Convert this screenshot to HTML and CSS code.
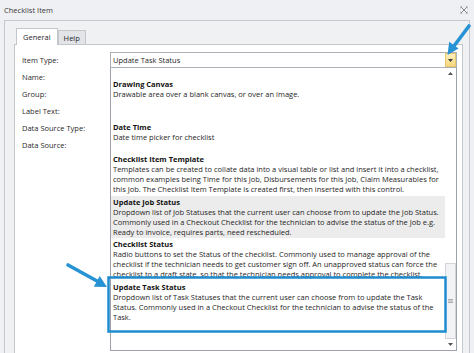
FILE: index.html
```html
<!DOCTYPE html>
<html>
<head>
<meta charset="utf-8">
<title>Checklist Item</title>
<link rel="stylesheet" href="styles.css">
</head>
<body>
<div class="window">
  <div class="titlebar">
    <span class="title">Checklist Item</span>
    <svg class="close" viewBox="0 0 8 8" width="8" height="8"><path d="M1 1L7 7M7 1L1 7" stroke="#8c8c8c" stroke-width="1" fill="none"/><path d="M0.5 2.5V0.5H2.5M5.5 0.5H7.5V2.5M7.5 5.5V7.5H5.5M2.5 7.5H0.5V5.5" stroke="#b5b5b5" stroke-width="0.8" fill="none"/></svg>
  </div>
  <div class="outer">
    <div class="tabs">
      <div class="tab tab-active">General</div>
      <div class="tab">Help</div>
    </div>
    <div class="page">
      <div class="form">
        <div class="labels">
          <div class="label">Item Type:</div>
          <div class="label">Name:</div>
          <div class="label">Group:</div>
          <div class="label">Label Text:</div>
          <div class="label">Data Source Type:</div>
          <div class="label">Data Source:</div>
        </div>
        <div class="field">
          <div class="combo">
            <span class="combo-text">Update Task Status</span>
            <div class="drop"><svg viewBox="0 0 5 3" width="5" height="3"><path d="M0 0H5L2.5 3Z" fill="#3a3a3a"/></svg></div>
          </div>
          <div class="list">
            <div class="items">
              <div class="item">
                <div class="it-title">Drawing Canvas</div>
                <div class="it-line">Drawable area over a blank canvas, or over an image.</div>
              </div>
              <div class="item">
                <div class="it-title">Date Time</div>
                <div class="it-line">Date time picker for checklist</div>
              </div>
              <div class="item">
                <div class="it-title">Checklist Item Template</div>
                <div class="it-line">Templates can be created to collate data into a visual table or list and insert it into a checklist,</div>
                <div class="it-line">common examples being Time for this Job, Disbursements for this Job, Claim Measurables for</div>
                <div class="it-line">this Job. The Checklist Item Template is created first, then inserted with this control.</div>
              </div>
              <div class="item item-hover">
                <div class="it-title">Update Job Status</div>
                <div class="it-line">Dropdown list of Job Statuses that the current user can choose from to update the Job Status.</div>
                <div class="it-line">Commonly used in a Checkout Checklist for the technician to advise the status of the Job e.g.</div>
                <div class="it-line">Ready to invoice, requires parts, need rescheduled.</div>
              </div>
              <div class="item">
                <div class="it-title">Checklist Status</div>
                <div class="it-line">Radio buttons to set the Status of the checklist. Commonly used to manage approval of the</div>
                <div class="it-line">checklist if the technician needs to get customer sign off. An unapproved status can force the</div>
                <div class="it-line">checklist to a draft state, so that the technician needs approval to complete the checklist.</div>
              </div>
              <div class="item">
                <div class="it-title">Update Task Status</div>
                <div class="it-line">Dropdown list of Task Statuses that the current user can choose from to update the Task</div>
                <div class="it-line">Status. Commonly used in a Checkout Checklist for the technician to advise the status of the</div>
                <div class="it-line">Task.</div>
              </div>
            </div>
            <div class="scroll">
              <div class="sb-btn"><svg viewBox="0 0 5 3" width="5" height="3"><path d="M0 3H5L2.5 0Z" fill="#555"/></svg></div>
              <div class="sb-track">
                <div class="sb-thumb"><svg viewBox="0 0 5 4" width="5" height="4"><path d="M0 0.5H5M0 2H5M0 3.5H5" stroke="#9a9a9a" stroke-width="0.8"/></svg></div>
              </div>
              <div class="sb-btn"><svg viewBox="0 0 5 3" width="5" height="3"><path d="M0 0H5L2.5 3Z" fill="#555"/></svg></div>
            </div>
          </div>
        </div>
      </div>
    </div>
  </div>
  <svg class="annot" viewBox="0 0 474 353" width="474" height="353">
    <rect x="108.5" y="277.5" width="337" height="54" fill="none" stroke="#1e8ccf" stroke-width="2.5"/>
    <path d="M469 26L454 46" stroke="#2793d4" stroke-width="3.6" stroke-linecap="round" fill="none"/>
    <path d="M447.5 55L449.2 41.8L458.5 48.6Z" fill="#2793d4"/>
    <path d="M68 265L97 281" stroke="#2793d4" stroke-width="3.6" stroke-linecap="round" fill="none"/>
    <path d="M107 287L93.8 286.8L99.7 276Z" fill="#2793d4"/>
  </svg>
</div>
</body>
</html>
```

FILE: styles.css
```css
* { box-sizing: border-box; }
html, body { margin: 0; padding: 0; }
body {
  width: 474px;
  height: 353px;
  overflow: hidden;
  background: #eef0f3;
  font-family: "Open Sans", "Noto Sans", sans-serif;
  font-size: 7.5px;
  color: #1f1f1f;
}
.window {
  position: relative;
  width: 474px;
  height: 353px;
  display: flex;
  flex-direction: column;
  background: #eef0f3;
  overflow: hidden;
}
.titlebar {
  height: 20px;
  flex: none;
  display: flex;
  align-items: center;
  justify-content: space-between;
  padding: 0 6px 0 4px;
}
.title { font-size: 7.5px; color: #3a3a3a; }
.close { display: block; }
.outer {
  flex: 1;
  margin: 0 4px;
  border: 1px solid #c5c8cd;
  border-bottom: none;
  background: #f0f1f3;
  padding: 7px 6px 0 9px;
  display: flex;
  flex-direction: column;
  min-height: 0;
}
.tabs {
  display: flex;
  align-items: flex-end;
  padding-left: 2px;
  height: 17px;
  flex: none;
  position: relative;
  z-index: 1;
  margin-bottom: -1px;
}
.tab {
  height: 14px;
  padding: 0 5px;
  display: flex;
  align-items: center;
  border: 1px solid #c3c6cb;
  border-bottom: none;
  background: #e2e4e7;
  color: #2a2a2a;
  margin-bottom: 1px;
}
.tab-active {
  height: 17px;
  padding: 0 6px;
  background: #ffffff;
  margin-bottom: 0;
}
.page {
  flex: 1;
  border: 1px solid #c3c6cb;
  border-bottom: none;
  background: #ffffff;
  padding: 7px 5px 0 7px;
  min-height: 0;
}
.form {
  display: grid;
  grid-template-columns: 88px 1fr;
}
.labels { display: flex; flex-direction: column; }
.label {
  height: 17px;
  line-height: 17px;
  color: #2a2a2a;
}
.field { display: flex; flex-direction: column; }
.combo {
  height: 16px;
  border: 1px solid #abafb6;
  display: flex;
  align-items: center;
  justify-content: space-between;
  padding: 0 0 0 2px;
  background: #fff;
}
.combo-text { color: #1f1f1f; }
.drop {
  width: 11px;
  height: 14px;
  display: flex;
  align-items: center;
  justify-content: center;
  background: linear-gradient(#fdf0c0, #f6d77c);
  border: 1px solid #e6c76e;
}
.drop svg { display: block; }
.list {
  height: 283px;
  border: 1px solid #9da1a8;
  border-top: none;
  display: flex;
  background: #fff;
}
.items {
  flex: 1;
  display: flex;
  flex-direction: column;
  overflow: hidden;
}
.item {
  height: 42.5px;
  flex: none;
  display: flex;
  flex-direction: column;
  justify-content: center;
  padding-left: 2px;
  line-height: 10px;
  white-space: nowrap;
  overflow: hidden;
}
.item-hover { background: #ececec; }
.it-title { font-weight: 700; color: #111; }
.it-line { color: #262626; }
.scroll {
  width: 11px;
  flex: none;
  display: flex;
  flex-direction: column;
  background: #fff;
}
.sb-btn {
  height: 11px;
  flex: none;
  display: flex;
  align-items: center;
  justify-content: center;
}
.sb-btn svg { display: block; }
.sb-track {
  flex: 1;
  display: flex;
  flex-direction: column;
  justify-content: flex-end;
}
.sb-thumb {
  height: 76px;
  border: 1px solid #d3d5d8;
  background: #f2f3f4;
  display: flex;
  align-items: center;
  justify-content: center;
}
.sb-thumb svg { display: block; }
.annot {
  position: absolute;
  left: 0;
  top: 0;
  pointer-events: none;
}
```
